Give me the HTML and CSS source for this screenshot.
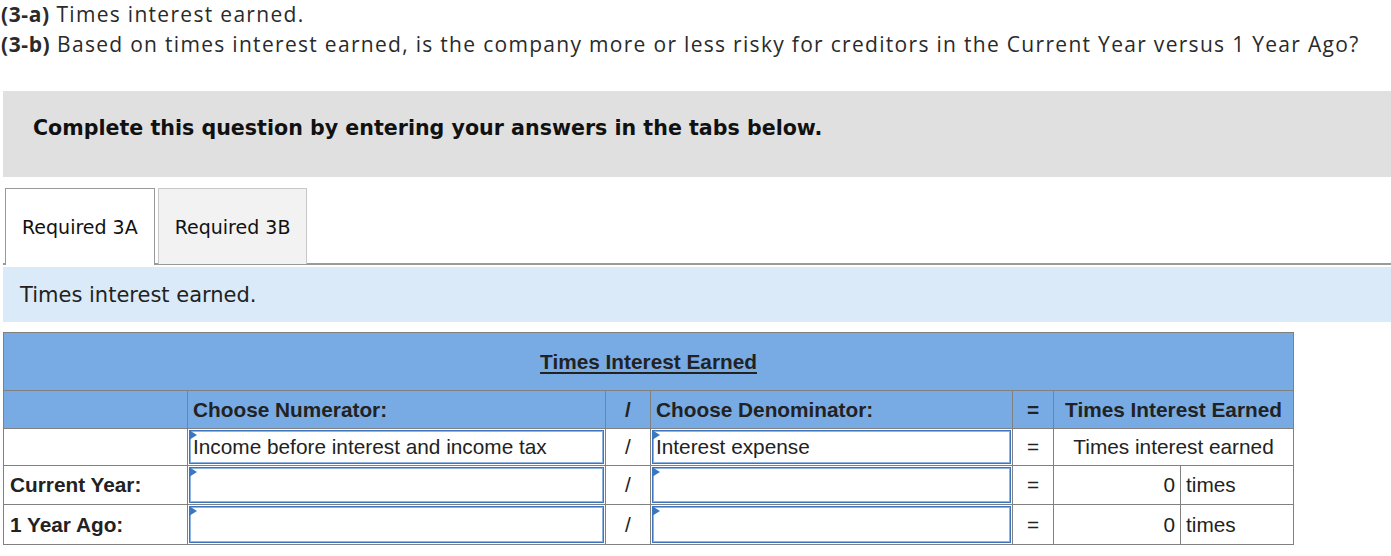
FILE: index.html
```html
<!DOCTYPE html>
<html>
<head>
<meta charset="utf-8">
<link rel="stylesheet" href="styles.css">
</head>
<body>
<div class="q">
  <p class="qline"><b>(3-a)</b> Times interest earned.</p>
  <p class="qline"><b>(3-b)</b> Based on times interest earned, is the company more or less risky for creditors in the Current Year versus 1 Year Ago?</p>
</div>
<div class="instr">Complete this question by entering your answers in the tabs below.</div>
<div class="tabs">
  <div class="tab active">Required 3A</div>
  <div class="tab">Required 3B</div>
</div>
<div class="subhead">Times interest earned.</div>
<table class="grid">
  <colgroup>
    <col class="c1"><col class="c2"><col class="c3"><col class="c4"><col class="c5"><col class="c6"><col class="c7">
  </colgroup>
  <tr class="h1">
    <th colspan="7"><span class="ul">Times Interest Earned</span></th>
  </tr>
  <tr class="h2">
    <th></th>
    <th class="left">Choose Numerator:</th>
    <th>/</th>
    <th class="left">Choose Denominator:</th>
    <th>=</th>
    <th colspan="2">Times Interest Earned</th>
  </tr>
  <tr class="r r1">
    <td></td>
    <td class="in"><div class="box">Income before interest and income tax</div></td>
    <td class="op">/</td>
    <td class="in"><div class="box">Interest expense</div></td>
    <td class="op">=</td>
    <td colspan="2" class="ctr">Times interest earned</td>
  </tr>
  <tr class="r r2">
    <td class="lbl">Current Year:</td>
    <td class="in"><div class="box"></div></td>
    <td class="op">/</td>
    <td class="in"><div class="box"></div></td>
    <td class="op">=</td>
    <td class="num">0</td>
    <td class="unit">times</td>
  </tr>
  <tr class="r r3">
    <td class="lbl">1 Year Ago:</td>
    <td class="in"><div class="box"></div></td>
    <td class="op">/</td>
    <td class="in"><div class="box"></div></td>
    <td class="op">=</td>
    <td class="num">0</td>
    <td class="unit">times</td>
  </tr>
</table>
</body>
</html>
```
FILE: styles.css
```css
html, body {
  margin: 0;
  padding: 0;
  background: #fff;
}
body {
  width: 1391px;
  overflow: hidden;
}
.q {
  font-family: "Open Sans", "Lato", sans-serif;
  font-size: 21px;
  letter-spacing: 1.3px;
  color: #2a2a2a;
  margin-top: -1px;
}
.qline {
  margin: 0;
  line-height: 30px;
  padding-left: 1px;
  white-space: nowrap;
}
.qline b {
  font-weight: 700;
  letter-spacing: 0.6px;
}
.instr {
  margin: 32px 0 0 3px;
  height: 86px;
  box-sizing: border-box;
  padding: 0 0 12px 30px;
  background: #e0e0e0;
  font-family: "DejaVu Sans", sans-serif;
  font-weight: bold;
  font-size: 20.6px;
  color: #111;
  display: flex;
  align-items: center;
}
.tabs {
  display: flex;
  gap: 3px;
  margin: 11px 0 0 3px;
  padding-left: 2px;
  border-bottom: 2px solid #999;
  height: 75px;
  align-items: flex-end;
}
.tab {
  font-family: "DejaVu Sans", sans-serif;
  font-size: 19px;
  color: #111;
  box-sizing: border-box;
  border: 1px solid #c8c8c8;
  border-bottom: none;
  background: #f2f2f2;
  display: flex;
  align-items: center;
  padding: 0 16px;
  margin-bottom: -1px;
  height: 76px;
}
.tab.active {
  background: #fff;
  border-color: #999;
  margin-bottom: -2px;
  height: 77px;
}
.subhead {
  margin: 2px 0 0 3px;
  height: 55px;
  background: #dbeaf8;
  font-family: "DejaVu Sans", sans-serif;
  font-size: 21px;
  color: #222;
  display: flex;
  align-items: center;
  padding-left: 17px;
}
.grid {
  margin: 10px 0 0 3px;
  border-collapse: collapse;
  width: 1291px;
  table-layout: fixed;
  font-family: "Liberation Sans", Arial, sans-serif;
  font-size: 20.8px;
  color: #222;
  border: 1px solid #808080;
}
.c1 { width: 184px; }
.c2 { width: 418px; }
.c3 { width: 45px; }
.c4 { width: 362px; }
.c5 { width: 41px; }
.c6 { width: 127px; }
.c7 { width: 113px; }
.grid th, .grid td {
  border: 1px solid #808080;
  padding: 0;
  line-height: 24px;
}
.grid th {
  background: #78abe4;
  font-weight: bold;
  text-align: center;
}
.h1 th {
  height: 57px;
  border-left: none;
  border-right: none;
}
.ul {
  text-decoration: underline;
  text-underline-offset: 3px;
}
.h2 th {
  height: 37px;
}
.h2 th.left {
  text-align: left;
  padding-left: 5px;
}
.lbl {
  font-weight: bold;
  padding-left: 6px !important;
}
.op, .ctr {
  text-align: center;
}
.num {
  text-align: right;
  padding-right: 5px !important;
}
.unit {
  padding-left: 5px !important;
}
.in {
  padding: 1px 1px !important;
}
.box {
  position: relative;
  height: 34px;
  box-sizing: border-box;
  border: 1px solid #3c74bd;
  box-shadow: inset 0 0 0 1px #8fb4e4;
  background: #fff;
  display: flex;
  align-items: center;
  padding-left: 3px;
  white-space: nowrap;
}
.r2 .box { height: 36px; }
.r3 .box { height: 37px; }
.box::before {
  content: "";
  position: absolute;
  left: -1px;
  top: -1px;
  width: 0;
  height: 0;
  border-top: 5px solid transparent;
  border-bottom: 5px solid transparent;
  border-left: 8px solid #3b76c2;
}
```
